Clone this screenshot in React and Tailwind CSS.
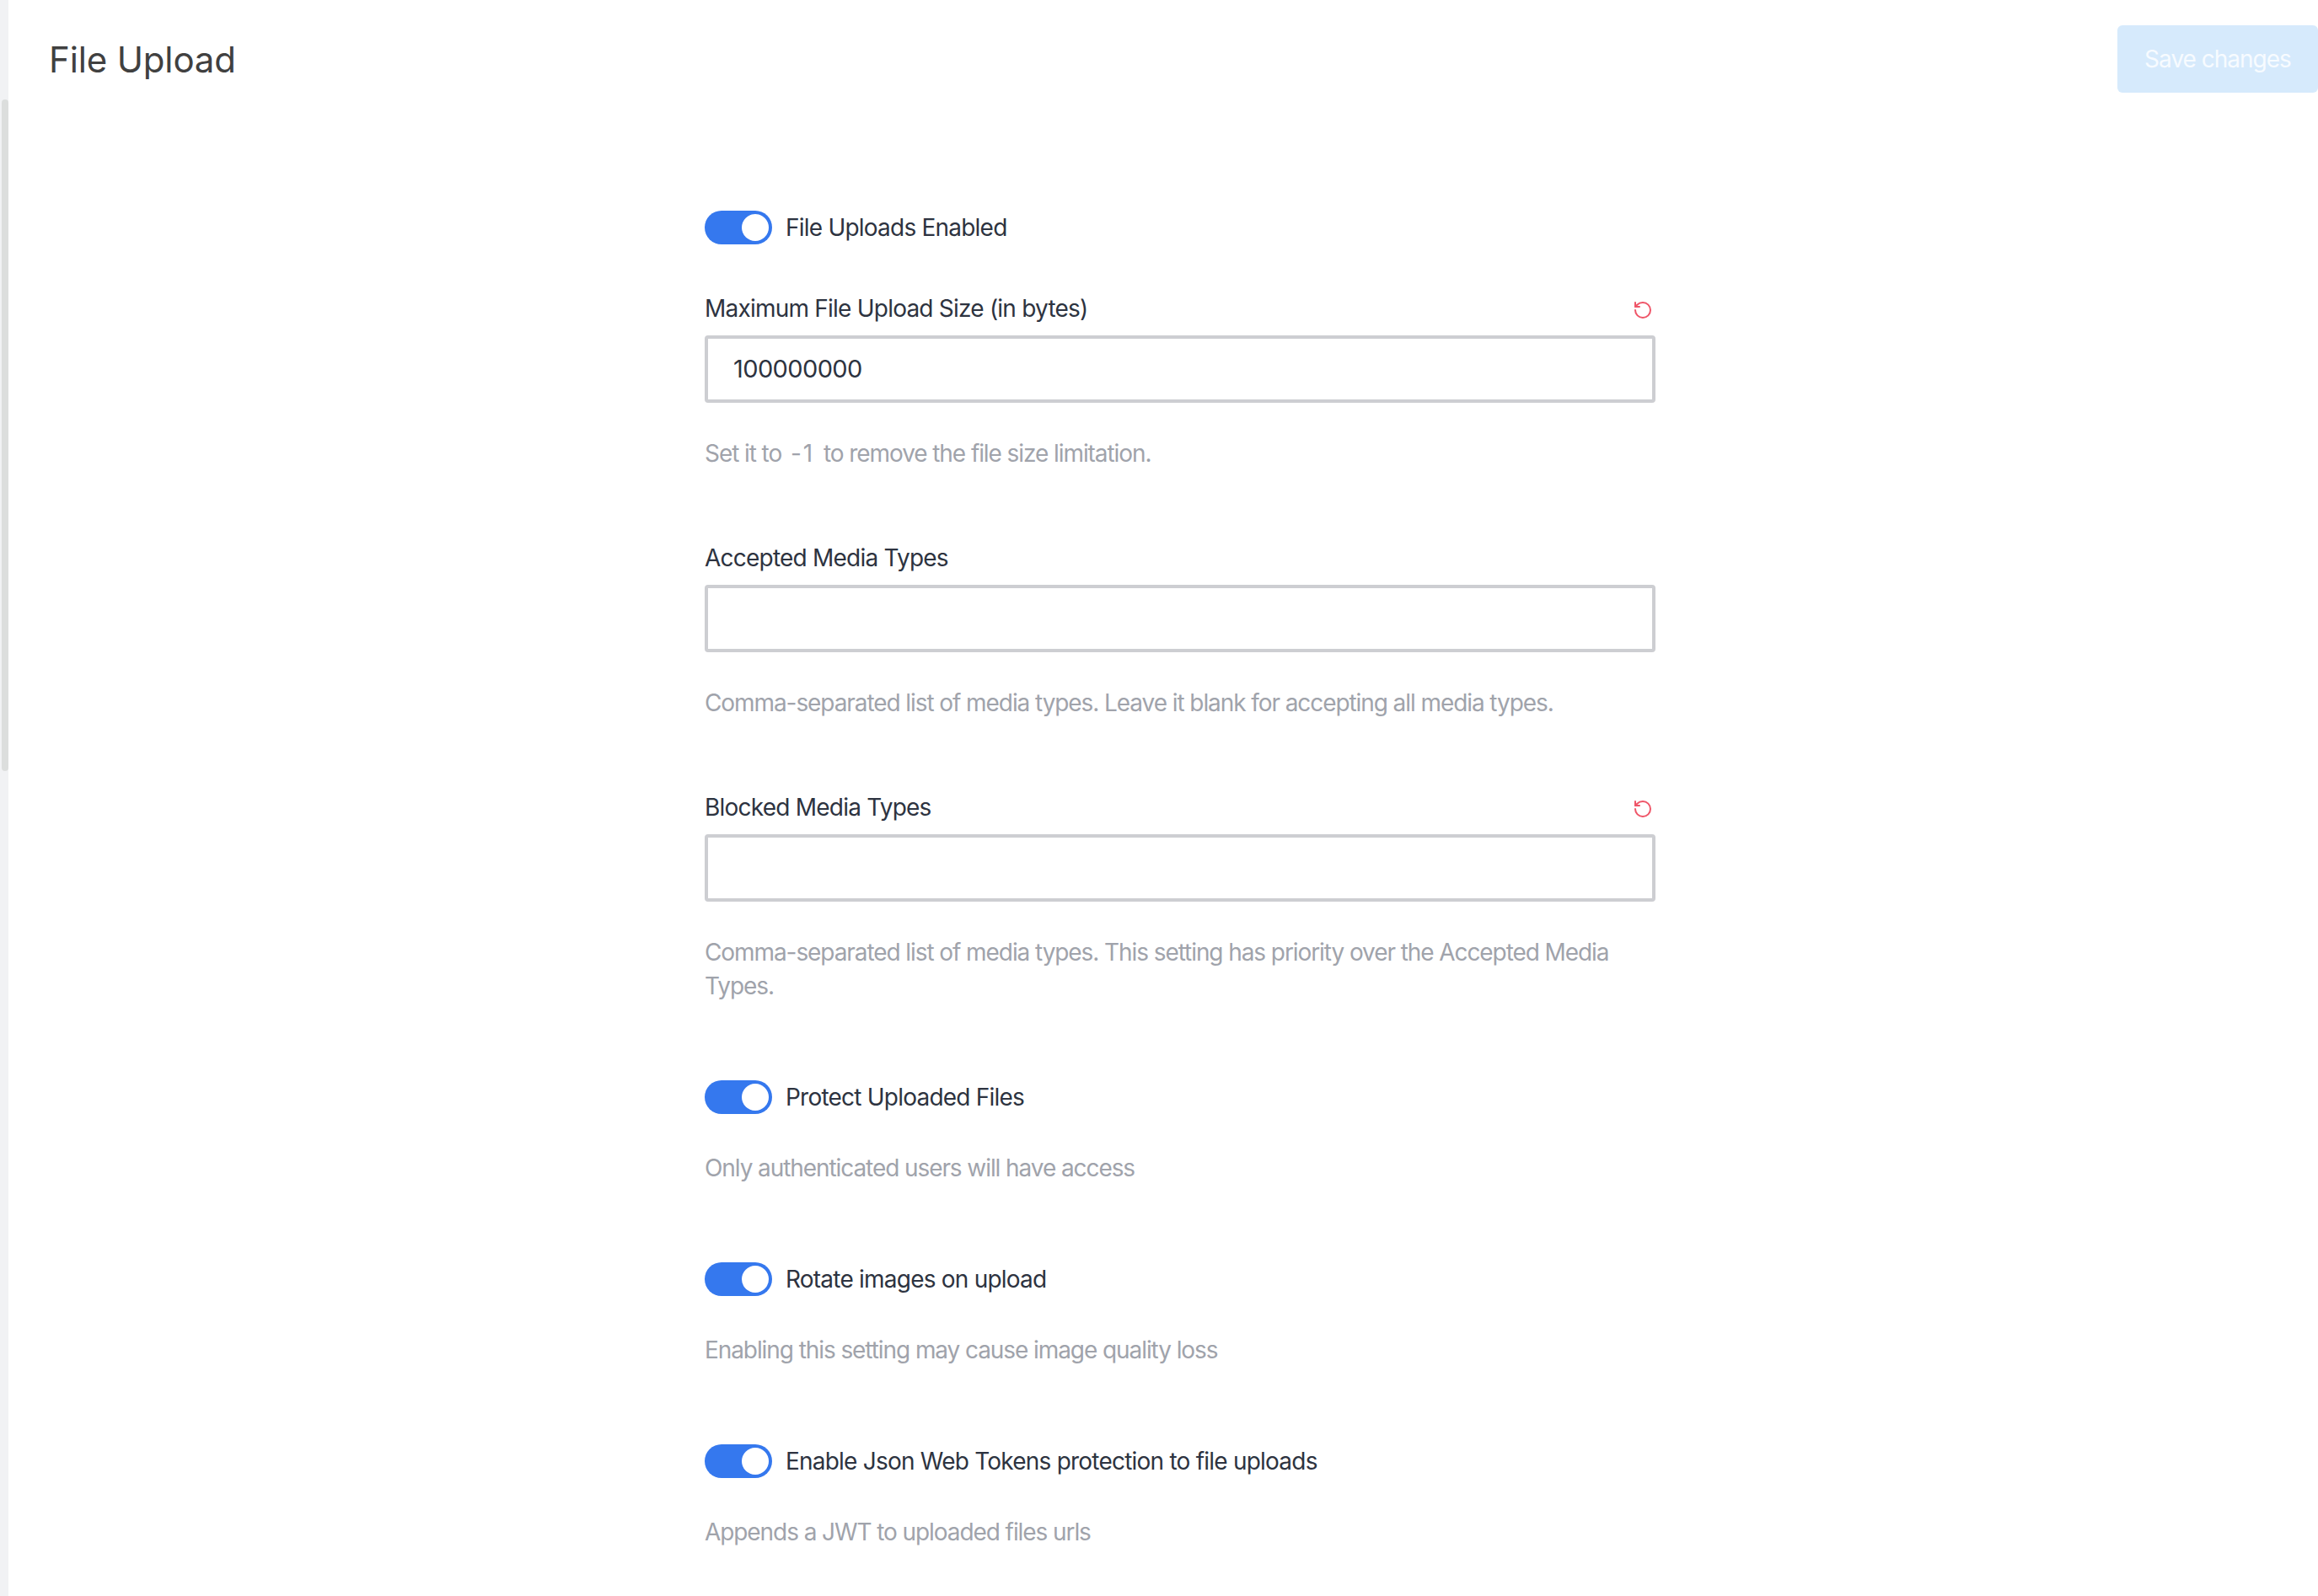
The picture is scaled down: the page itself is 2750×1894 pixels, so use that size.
import { RotateCcw } from 'lucide-react';

function Toggle({ label, className = '' }) {
  return (
    <div className={`flex items-center gap-[16px] ${className}`}>
      <div className="flex h-[40px] w-[80px] items-center justify-end rounded-full bg-[#3578ee] pr-[4px]">
        <div className="h-[32px] w-[32px] rounded-full bg-white" />
      </div>
      <span className="text-[28px] leading-[40px] tracking-[-0.78px] text-[#2d3340]">{label}</span>
    </div>
  );
}

function Field({ label, value, reset, children, className = '' }) {
  return (
    <div className={className}>
      <div className="flex h-[40px] items-center justify-between">
        <span className="text-[28px] leading-[40px] tracking-[-0.78px] text-[#2d3340]">{label}</span>
        {reset && <RotateCcw size={24} strokeWidth={2} className="mr-[3px] mt-[3px] text-[#ef5568]" />}
      </div>
      <div className="mt-[12px] flex h-[80px] items-center rounded-[4px] border-[4px] border-[#cdced2] px-[30px] text-[29px] tracking-[-0.6px] text-[#2d3340]">
        {value}
      </div>
      <p className="mt-[40px] text-[28px] leading-[40px] tracking-[-1.08px] text-[#a0a3ab]">{children}</p>
    </div>
  );
}

function Help({ children }) {
  return <p className="mt-[44px] text-[28px] leading-[40px] tracking-[-1.08px] text-[#a0a3ab]">{children}</p>;
}

export default function App() {
  return (
    <div className="flex h-[1894px] w-full overflow-hidden bg-white font-['Inter',sans-serif]">
      <div className="w-[10px] shrink-0 bg-[#f1f2f4] pl-[2px] pt-[118px]">
        <div className="h-[797px] rounded-[4px] bg-[#dcdedd]" />
      </div>
      <div className="min-w-0 flex-1">
        <header className="flex h-[140px] items-center justify-between">
          <h1 className="pl-[48px] text-[42px] tracking-[-0.15px] text-[#404040]">File Upload</h1>
          <button className="h-[80px] w-[238px] rounded-[6px] bg-[#d6eafc] text-[28px] tracking-[-1px] text-[#f7fbff]">Save changes</button>
        </header>
        <main className="ml-[826px] w-[1128px] pt-[110px]">
          <Toggle label="File Uploads Enabled" />
          <Field label="Maximum File Upload Size (in bytes)" value="100000000" reset className="mt-[56px]">
            Set it to <span className="mx-[4px] tracking-[2px]">-1</span> to remove the file size limitation.
          </Field>
          <Field label="Accepted Media Types" className="mt-[84px]">
            Comma-separated list of media types. Leave it blank for accepting all media types.
          </Field>
          <Field label="Blocked Media Types" reset className="mt-[84px]">
            Comma-separated list of media types. This setting has priority over the Accepted Media Types.
          </Field>
          <Toggle label="Protect Uploaded Files" className="mt-[92px]" />
          <Help>Only authenticated users will have access</Help>
          <Toggle label="Rotate images on upload" className="mt-[92px]" />
          <Help>Enabling this setting may cause image quality loss</Help>
          <Toggle label="Enable Json Web Tokens protection to file uploads" className="mt-[92px]" />
          <Help>Appends a JWT to uploaded files urls</Help>
        </main>
      </div>
    </div>
  );
}
